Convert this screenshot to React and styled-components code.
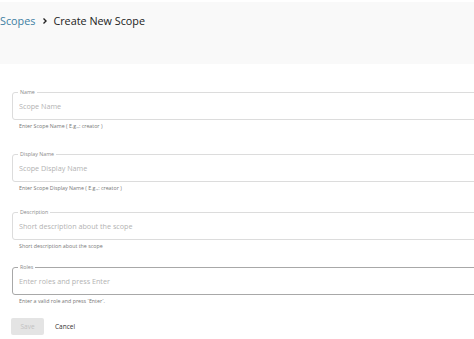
import React from 'react';
import styled, { createGlobalStyle } from 'styled-components';

const Global = createGlobalStyle`
  html, body { margin: 0; padding: 0; background: #fff; overflow: hidden; }
  body { font-family: 'Open Sans', 'Noto Sans', sans-serif; }
`;

const Page = styled.div`
  width: 474px;
  height: 339px;
  padding-top: 2px;
  box-sizing: border-box;
  overflow: hidden;
`;

const Header = styled.div`
  height: 62px;
  background: #f9f9f9;
  display: flex;
  align-items: flex-start;
  padding-top: 11px;
  box-sizing: border-box;
`;

const Crumbs = styled.div`
  display: flex;
  align-items: center;
  gap: 4px;
  font-size: 10.8px;
  line-height: 16px;
`;

const CrumbLink = styled.span`
  color: #3d7fa3;
  margin-right: 2px;
`;

const CrumbCurrent = styled.span`
  color: #222;
`;

const Form = styled.form`
  padding: 28px 0 0 12px;
  width: 640px;
  display: flex;
  flex-direction: column;
`;

const Field = styled.div`
  display: flex;
  flex-direction: column;
  margin-bottom: ${p => p.$gap}px;
`;

const Outline = styled.div`
  height: 28px;
  box-sizing: border-box;
  border: ${p => (p.$active ? '1.5px solid #a8a8a8' : '1px solid #dcdcdc')};
  border-radius: 3px;
  position: relative;
  display: flex;
  align-items: center;
  padding: 0 6px;
`;

const Label = styled.span`
  position: absolute;
  top: -4px;
  left: 5px;
  font-size: 5.3px;
  line-height: 6px;
  color: #8a8a8a;
  background: #fff;
  padding: 0 2px;
`;

const Input = styled.input`
  border: none;
  outline: none;
  background: transparent;
  font-family: 'Open Sans', 'Noto Sans', sans-serif;
  font-size: 7.2px;
  color: #333;
  padding: 0;
  width: 100%;
  &::placeholder { color: #b3b3b3; }
`;

const Helper = styled.div`
  font-size: 5.3px;
  line-height: 7px;
  color: #777;
  margin: 3px 0 0 7px;
`;

const Actions = styled.div`
  display: flex;
  align-items: center;
  gap: 11px;
  margin-left: -1px;
`;

const SaveButton = styled.button`
  width: 33px;
  height: 17px;
  border: none;
  border-radius: 2px;
  background: #e4e4e4;
  color: #c2c2c2;
  font-family: inherit;
  font-size: 6.5px;
  padding: 0;
`;

const CancelButton = styled.button`
  border: none;
  background: none;
  color: #333;
  font-family: inherit;
  font-size: 6.5px;
  padding: 0;
`;

const fields = [
  { label: 'Name', placeholder: 'Scope Name', help: 'Enter Scope Name ( E.g.,: creator )', gap: 24 },
  { label: 'Display Name', placeholder: 'Scope Display Name', help: 'Enter Scope Display Name ( E.g.,: creator )', gap: 20 },
  { label: 'Description', placeholder: 'Short description about the scope', help: 'Short description about the scope', gap: 17 },
  { label: 'Roles', placeholder: 'Enter roles and press Enter', help: 'Enter a valid role and press `Enter`.', active: true, gap: 13 },
];

export default function App() {
  return (
    <Page>
      <Global />
      <Header>
        <Crumbs>
          <CrumbLink>Scopes</CrumbLink>
          <svg width="8" height="8" viewBox="0 0 8 8">
            <path d="M2.5 1.5 L5 4 L2.5 6.5" fill="none" stroke="#222" strokeWidth="1.4" />
          </svg>
          <CrumbCurrent>Create New Scope</CrumbCurrent>
        </Crumbs>
      </Header>
      <Form onSubmit={e => e.preventDefault()}>
        {fields.map(f => (
          <Field key={f.label} $gap={f.gap}>
            <Outline $active={f.active}>
              <Label>{f.label}</Label>
              <Input placeholder={f.placeholder} />
            </Outline>
            <Helper>{f.help}</Helper>
          </Field>
        ))}
        <Actions>
          <SaveButton type="button" disabled>Save</SaveButton>
          <CancelButton type="button">Cancel</CancelButton>
        </Actions>
      </Form>
    </Page>
  );
}
